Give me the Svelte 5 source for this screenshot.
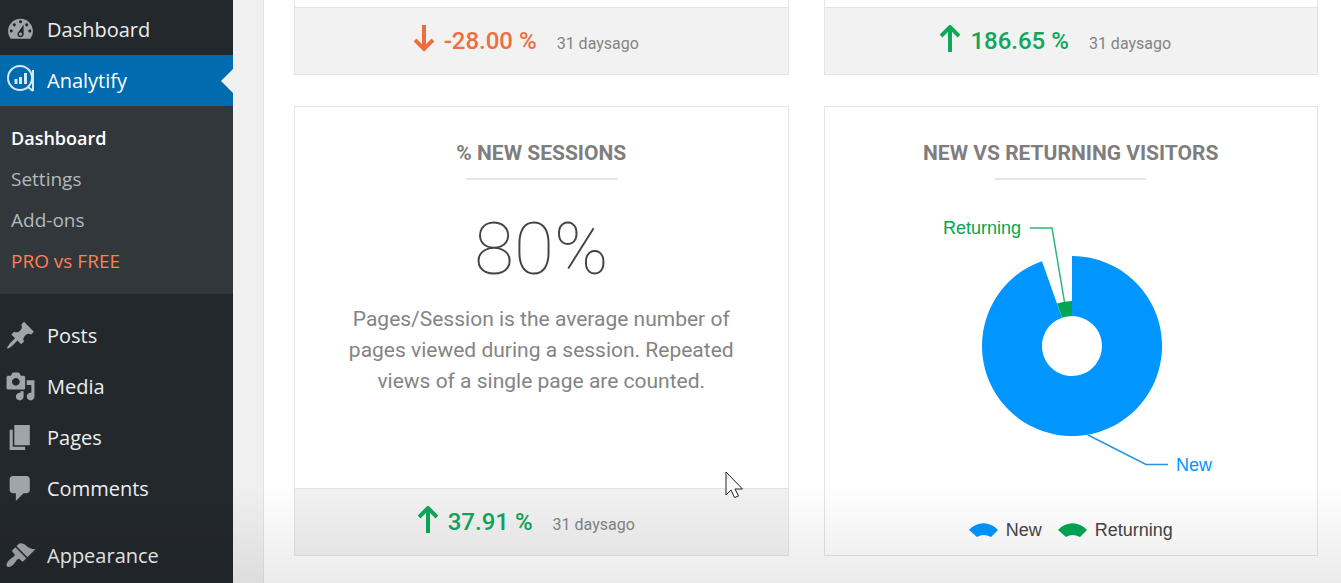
<script lang="ts">
  type Item = { label: string; icon: string };

  const content: Item[] = [
    { label: 'Posts', icon: 'M10.44 3.02l1.82-1.82 6.36 6.35-1.83 1.82c-1.05-.68-2.48-.57-3.41.36l-.75.75c-.92.93-1.04 2.35-.35 3.41l-1.83 1.82-2.41-2.41-2.8 2.79c-.42.42-3.38 2.71-3.8 2.29s1.86-3.39 2.28-3.81l2.79-2.79L4.1 9.36l1.83-1.82c1.05.69 2.48.57 3.4-.36l.75-.75c.93-.92 1.05-2.35.36-3.41z' },
    { label: 'Media', icon: 'M13 11V4c0-.55-.45-1-1-1h-1.67L9 1H5L3.67 3H2c-.55 0-1 .45-1 1v7c0 .55.45 1 1 1h10c.55 0 1-.45 1-1zM7 4.5c1.38 0 2.5 1.12 2.5 2.5S8.38 9.5 7 9.5 4.5 8.38 4.5 7 5.62 4.5 7 4.5zM14 6h5v10.5c0 1.38-1.12 2.5-2.5 2.5S14 17.88 14 16.5s1.12-2.5 2.5-2.5c.17 0 .34.02.5.05V9h-3V6zm-4 8.05V13h2v3.5c0 1.38-1.12 2.5-2.5 2.5S7 17.88 7 16.5 8.12 14 9.5 14c.17 0 .34.02.5.05z' },
    { label: 'Pages', icon: 'M6 15V2h10v13H6zm-1 1h8v2H3V5h2v11z' },
    { label: 'Comments', icon: 'M5 2h9c1.1 0 2 .9 2 2v7c0 1.1-.9 2-2 2h-2l-5 5v-5H5c-1.1 0-2-.9-2-2V4c0-1.1.9-2 2-2z' }
  ];
  const dashboard: Item = {
    label: 'Dashboard',
    icon: 'M3.76 16h12.48c1.1-1.37 1.76-3.11 1.76-5 0-4.42-3.58-8-8-8s-8 3.58-8 8c0 1.89.66 3.63 1.76 5zM10 4c.55 0 1 .45 1 1s-.45 1-1 1-1-.45-1-1 .45-1 1-1zM6 6c.55 0 1 .45 1 1s-.45 1-1 1-1-.45-1-1 .45-1 1-1zm8 0c.55 0 1 .45 1 1s-.45 1-1 1-1-.45-1-1 .45-1 1-1zm-5.37 5.55L12 7v6c0 1.1-.9 2-2 2s-2-.9-2-2c0-.57.24-1.08.63-1.45zM4 10c.55 0 1 .45 1 1s-.45 1-1 1-1-.45-1-1 .45-1 1-1zm12 0c.55 0 1 .45 1 1s-.45 1-1 1-1-.45-1-1 .45-1 1-1zm-5 3c0-.55-.45-1-1-1s-1 .45-1 1 .45 1 1 1 1-.45 1-1z'
  };
  const appearance: Item = {
    label: 'Appearance',
    icon: 'M14.48 11.06L7.41 3.99l1.5-1.5c.5-.56 2.3-.47 3.51.32 1.21.8 1.43 1.28 2.91 2.1 1.18.64 2.45 1.26 4.45.85zm-.71.71L6.7 4.7 4.93 6.47c-.39.39-.39 1.02 0 1.41l1.06 1.06c.39.39.39 1.03 0 1.42-.6.6-1.43 1.11-2.21 1.69-.35.26-.7.53-1.01.84C1.43 14.23.4 16.08 1.4 17.07c.99 1 2.84-.03 4.18-1.36.31-.31.58-.66.85-1.02.57-.78 1.08-1.61 1.69-2.21.39-.39 1.02-.39 1.41 0l1.06 1.06c.39.39 1.02.39 1.41 0z'
  };

  const submenu = [
    { label: 'Dashboard', kind: 'current' },
    { label: 'Settings', kind: '' },
    { label: 'Add-ons', kind: '' },
    { label: 'PRO vs FREE', kind: 'promo' }
  ];

  const legend = [
    { label: 'New', color: '#0095ff' },
    { label: 'Returning', color: '#00a753' }
  ];
</script>

{#snippet menuItem(item: Item)}
  <li>
    <a class="item" href="#{item.label.toLowerCase()}">
      <svg class="icon" viewBox="0 0 20 20"><path fill-rule="evenodd" d={item.icon} /></svg>
      {item.label}
    </a>
  </li>
{/snippet}

{#snippet trend(value: string, down: boolean)}
  <footer class="trend" class:down>
    <svg class="arrow" viewBox="0 0 20 28">
      {#if down}
        <path d="M10 0V25M1 15l9 9 9-9" />
      {:else}
        <path d="M10 27V2M1 11l9-9 9 9" />
      {/if}
    </svg>
    <span class="value">{value} %</span>
    <span class="ago">31 daysago</span>
  </footer>
{/snippet}

<div class="page">
  <nav class="sidebar">
    <ul>
      {@render menuItem(dashboard)}
      <li>
        <a class="item active" href="#analytify">
          <svg class="icon brand" viewBox="0 0 31 31">
            <circle cx="15" cy="13" r="12" />
            <path d="M28 5v21M23 22l5 4" />
            <path class="bars" d="M11 14v5M15.500 12v7M20.500 8v11" />
          </svg>
          Analytify
        </a>
        <ul class="submenu">
          {#each submenu as s}
            <li><a class={s.kind} href="#analytify-{s.label.toLowerCase().replaceAll(' ', '-')}">{s.label}</a></li>
          {/each}
        </ul>
      </li>
    </ul>
    <ul>
      {#each content as item}
        {@render menuItem(item)}
      {/each}
    </ul>
    <ul>
      {@render menuItem(appearance)}
    </ul>
  </nav>

  <main>
    <div class="grid">
      <section class="card cut">
        {@render trend('-28.00', true)}
      </section>
      <section class="card cut">
        {@render trend('186.65', false)}
      </section>

      <section class="card">
        <h2>% NEW SESSIONS</h2>
        <div class="stat">80%</div>
        <p>Pages/Session is the average number of pages viewed during a session. Repeated views of a single page are counted.</p>
        {@render trend('37.91', false)}
      </section>

      <section class="card">
        <h2>NEW VS RETURNING VISITORS</h2>
        <svg class="chart" viewBox="0 0 300 290">
          <path fill="#0095ff" d="M151 56A90 90 0 1 1 121 61.150L141 117.700A30 30 0 1 0 151 116Z" />
          <path fill="#00a753" d="M151 101A45 45 0 0 0 136 103.600L141 117.700A30 30 0 0 1 151 116Z" />
          <path class="line returning" d="M143.500 102L131 28H109" />
          <path class="line new" d="M167 235L225 264.500H247" />
          <text x="22" y="34" fill="#00a753">Returning</text>
          <text x="255" y="271" fill="#0095ff">New</text>
        </svg>
        <ul class="legend">
          {#each legend as l}
            <li>
              <svg viewBox="0 0 29 15">
                <path fill={l.color} d="M0 7C8-2 21-2 29 7L22 14Q14 10 8 14Z" />
              </svg>
              {l.label}
            </li>
          {/each}
        </ul>
      </section>
    </div>
  </main>

  <div class="shade"></div>
  <svg class="cursor" viewBox="0 0 18 28">
    <path d="M1 1V24L6 19L9.500 26.500L13.500 25L10 18H17.500Z" />
  </svg>
</div>

<style>
  :global(body) { background: #fff; overflow: hidden; }
  ul { list-style: none; margin: 0; padding: 0; }
  a { text-decoration: none; }

  .page {
    position: relative;
    display: flex;
    height: 100vh;
    overflow: hidden;
    background: #f0f0f1;
    font-family: Roboto, sans-serif;
  }

  /* admin menu */
  .sidebar {
    flex: none;
    display: flex;
    flex-direction: column;
    gap: 16px;
    box-sizing: border-box;
    width: 233px;
    padding-top: 4px;
    background: #23282d;
    font-family: "Open Sans", "Noto Sans", sans-serif;
  }
  .item {
    position: relative;
    display: flex;
    align-items: center;
    gap: 11px;
    height: 51px;
    padding-left: 5px;
    color: #eee;
    font-size: 20px;
  }
  .icon { width: 31px; height: 31px; fill: #a0a5aa; }
  .brand { fill: none; stroke: #d8e8f4; stroke-width: 2; }
  .brand .bars { stroke-width: 3; }
  .active { background: #006bae; color: #fff; }
  .active::after {
    content: '';
    position: absolute;
    right: 0;
    top: 14px;
    border: 12px solid transparent;
    border-left: 0;
    border-right-color: #f0f0f1;
  }
  .submenu { padding: 12px 0; background: #32373c; }
  .submenu a {
    display: block;
    padding-left: 11px;
    color: #b4b9be;
    font-size: 19px;
    line-height: 41px;
  }
  .submenu .current { color: #fff; font-size: 18px; font-weight: 600; }
  .submenu .promo { color: #ff8052; }

  /* report */
  main {
    flex: 1;
    margin-left: 30px;
    padding: 0 23px 28px 30px;
    border-left: 1px solid #e2e2e4;
    background: #fff;
  }
  .grid {
    display: grid;
    grid-template-columns: 1fr 1fr;
    gap: 31px 35px;
  }
  .card {
    display: flex;
    flex-direction: column;
    align-items: center;
    box-sizing: border-box;
    min-height: 450px;
    border: 1px solid #e2e4e6;
  }
  .cut { min-height: 0; padding-top: 7px; border-top: 0; }
  h2 {
    margin: 32px 0 0;
    color: #7e7e7e;
    font-size: 21px;
    font-weight: 700;
    line-height: 28px;
    text-align: center;
  }
  h2::after {
    content: '';
    display: block;
    width: 151px;
    height: 2px;
    margin: 11px auto 0;
    background: #e2e5e9;
  }
  .stat {
    margin-top: 29px;
    color: #444;
    font-size: 73px;
    font-weight: 100;
    line-height: 80px;
  }
  p {
    max-width: 400px;
    margin: 15px 0 0;
    color: #848484;
    font-size: 21px;
    line-height: 31px;
    text-align: center;
  }
  .trend {
    display: flex;
    align-items: center;
    justify-content: center;
    box-sizing: border-box;
    width: 100%;
    height: 67px;
    margin-top: auto;
    padding-right: 30px;
    border-top: 1px solid #e2e4e6;
    background: #f2f2f2;
    color: #0ea75b;
  }
  .down { color: #ef6d41; }
  .arrow { width: 20px; height: 28px; margin: 0 10px 4px 0; fill: none; stroke: currentColor; stroke-width: 4; }
  .value { font-size: 24px; font-weight: 500; }
  .ago { margin: 4px 0 0 20px; color: #848484; font-size: 16px; }

  .chart { width: 300px; height: 290px; margin-top: 20px; }
  .chart text { font-family: "Liberation Sans", Arial, sans-serif; font-size: 18px; }
  .line { fill: none; stroke-width: 1.5; }
  .returning { stroke: #2db871; }
  .new { stroke: #2a93dd; }
  .legend { display: flex; gap: 16px; margin-top: 29px; }
  .legend li {
    display: flex;
    align-items: center;
    gap: 8px;
    color: #444;
    font: 18px/22px "Liberation Sans", Arial, sans-serif;
  }
  .legend svg { width: 29px; height: 15px; }

  /* fade along the bottom edge */
  .shade {
    position: absolute;
    right: 0;
    bottom: 0;
    left: 0;
    height: 100px;
    background: linear-gradient(transparent, rgba(0, 0, 0, 0.08));
    pointer-events: none;
  }
  .cursor {
    position: absolute;
    left: 725px;
    top: 471px;
    width: 18px;
    height: 28px;
    fill: #fff;
    stroke: #222;
  }
</style>
